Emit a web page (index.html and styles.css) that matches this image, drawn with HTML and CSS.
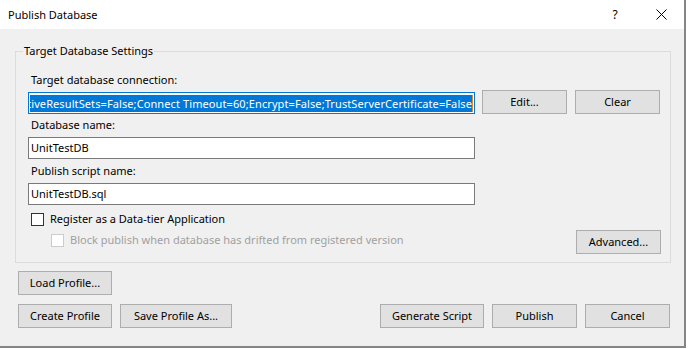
FILE: index.html
```html
<!DOCTYPE html>
<html lang="en">
<head>
<meta charset="utf-8">
<title>Publish Database</title>
<link rel="stylesheet" href="styles.css">
</head>
<body>
<div class="window">
  <div class="titlebar">
    <span class="title">Publish Database</span>
    <span class="tb-btn help">?</span>
    <span class="tb-btn close"><svg width="11" height="11" viewBox="0 0 11 11"><path d="M0.5 0.5L10.5 10.5M10.5 0.5L0.5 10.5" stroke="#000" stroke-width="1" fill="none"/></svg></span>
  </div>
  <div class="body">
    <fieldset class="group">
      <legend class="legend">Target Database Settings</legend>
      <div class="group-inner">
        <div class="label">Target database connection:</div>
        <div class="conn-row">
          <div class="textbox focused">
            <div class="scroll"><span class="sel">tiveResultSets=False;Connect Timeout=60;Encrypt=False;TrustServerCertificate=False</span></div>
          </div>
          <button class="btn btn-edit">Edit...</button>
          <button class="btn btn-clear">Clear</button>
        </div>
        <div class="label gap3">Database name:</div>
        <div class="textbox field">UnitTestDB</div>
        <div class="label gap4">Publish script name:</div>
        <div class="textbox field">UnitTestDB.sql</div>
        <label class="check-row">
          <input type="checkbox" class="cb">
          <span class="check-text">Register as a Data-tier Application</span>
        </label>
        <div class="adv-row">
          <label class="check-row sub disabled">
            <input type="checkbox" class="cb" disabled>
            <span class="check-text">Block publish when database has drifted from registered version</span>
          </label>
          <button class="btn btn-adv">Advanced...</button>
        </div>
      </div>
    </fieldset>
    <div class="actions">
      <div class="act-row">
        <button class="btn btn-load">Load Profile...</button>
      </div>
      <div class="act-row second">
        <button class="btn btn-load">Create Profile</button>
        <button class="btn btn-save">Save Profile As...</button>
        <div class="spacer"></div>
        <button class="btn btn-gen">Generate Script</button>
        <button class="btn btn-std">Publish</button>
        <button class="btn btn-std">Cancel</button>
      </div>
    </div>
  </div>
</div>
</body>
</html>
```
FILE: styles.css
```css
* { box-sizing: border-box; }
html, body { margin: 0; padding: 0; background: #ffffff; }
body {
  font-family: "Noto Sans", "Open Sans", sans-serif;
  font-size: 11px;
  line-height: 16px;
  color: #000;
}
.window {
  width: 686px;
  height: 348px;
  background: #f0f0f0;
  border-right: 2px solid #858585;
  border-bottom: 2px solid #858585;
  display: flex;
  flex-direction: column;
}
.titlebar {
  height: 29px;
  background: #ffffff;
  display: flex;
  align-items: center;
  flex-shrink: 0;
}
.title {
  flex: 1;
  padding-left: 8px;
  font-size: 11px;
}
.tb-btn {
  width: 46px;
  height: 29px;
  display: flex;
  align-items: center;
  justify-content: center;
}
.help { font-size: 12px; }
.body {
  padding: 14px 0 0 15px;
}
.group {
  margin: 0;
  padding: 0;
  width: 656px;
  min-width: 0;
  border: 1px solid #dcdcdc;
}
.legend {
  margin-left: 7px;
  padding: 0 1px;
  line-height: 16px;
}
.group-inner {
  padding: 13px 9px 8px 12px;
}
.label {
  height: 16px;
  padding-left: 3px;
  white-space: nowrap;
}
.gap3 { margin-top: 3px; }
.gap4 { margin-top: 4px; }
.conn-row {
  margin-top: 2px;
  height: 24px;
  display: flex;
  align-items: flex-end;
}
.textbox {
  width: 447px;
  height: 22px;
  background: #ffffff;
  border: 1px solid #7a7a7a;
}
.field {
  margin-top: 4px;
  padding: 2px 2px;
  white-space: nowrap;
}
.focused {
  border-color: #0078d7;
  padding: 1px 0;
  flex-shrink: 0;
}
.scroll {
  margin: 0 1px;
  height: 18px;
  overflow: hidden;
  display: flex;
  justify-content: flex-end;
  align-items: center;
}
.sel {
  flex-shrink: 0;
  white-space: nowrap;
  background: #0078d7;
  color: #ffffff;
  line-height: 17px;
  letter-spacing: 0.1px;
  border-right: 1px solid #e08a2c;
}
.btn {
  font-family: inherit;
  font-size: 11px;
  line-height: 16px;
  color: #000;
  background: #e1e1e1;
  border: 1px solid #adadad;
  border-radius: 0;
  height: 24px;
  padding: 0;
  margin: 0;
  flex-shrink: 0;
}
.btn-edit { width: 85px; margin-left: 7px; }
.btn-clear { width: 85px; margin-left: 8px; }
.btn-adv { width: 85px; }
.check-row {
  margin-top: 6px;
  height: 16px;
  display: flex;
  align-items: center;
  padding-left: 3px;
}
.cb {
  appearance: none;
  -webkit-appearance: none;
  width: 13px;
  height: 13px;
  margin: 0;
  border: 1px solid #333333;
  background: #ffffff;
  flex-shrink: 0;
}
.cb:disabled {
  border-color: #cccccc;
  background: #ffffff;
}
.check-text {
  margin-left: 6px;
  white-space: nowrap;
}
.disabled .check-text { color: #a0a0a0; }
.adv-row {
  margin-top: 3px;
  height: 24px;
  display: flex;
  justify-content: space-between;
  align-items: flex-start;
}
.check-row.sub {
  margin-top: 2px;
  padding-left: 23px;
}
.actions {
  padding-left: 3px;
}
.act-row {
  margin-top: 8px;
  display: flex;
}
.act-row.second {
  margin-top: 9px;
  width: 652px;
}
.btn-load { width: 94px; }
.btn-save { width: 112px; margin-left: 8px; }
.spacer { flex: 1; }
.btn-gen { width: 104px; }
.btn-std { width: 85px; margin-left: 8px; }
```
